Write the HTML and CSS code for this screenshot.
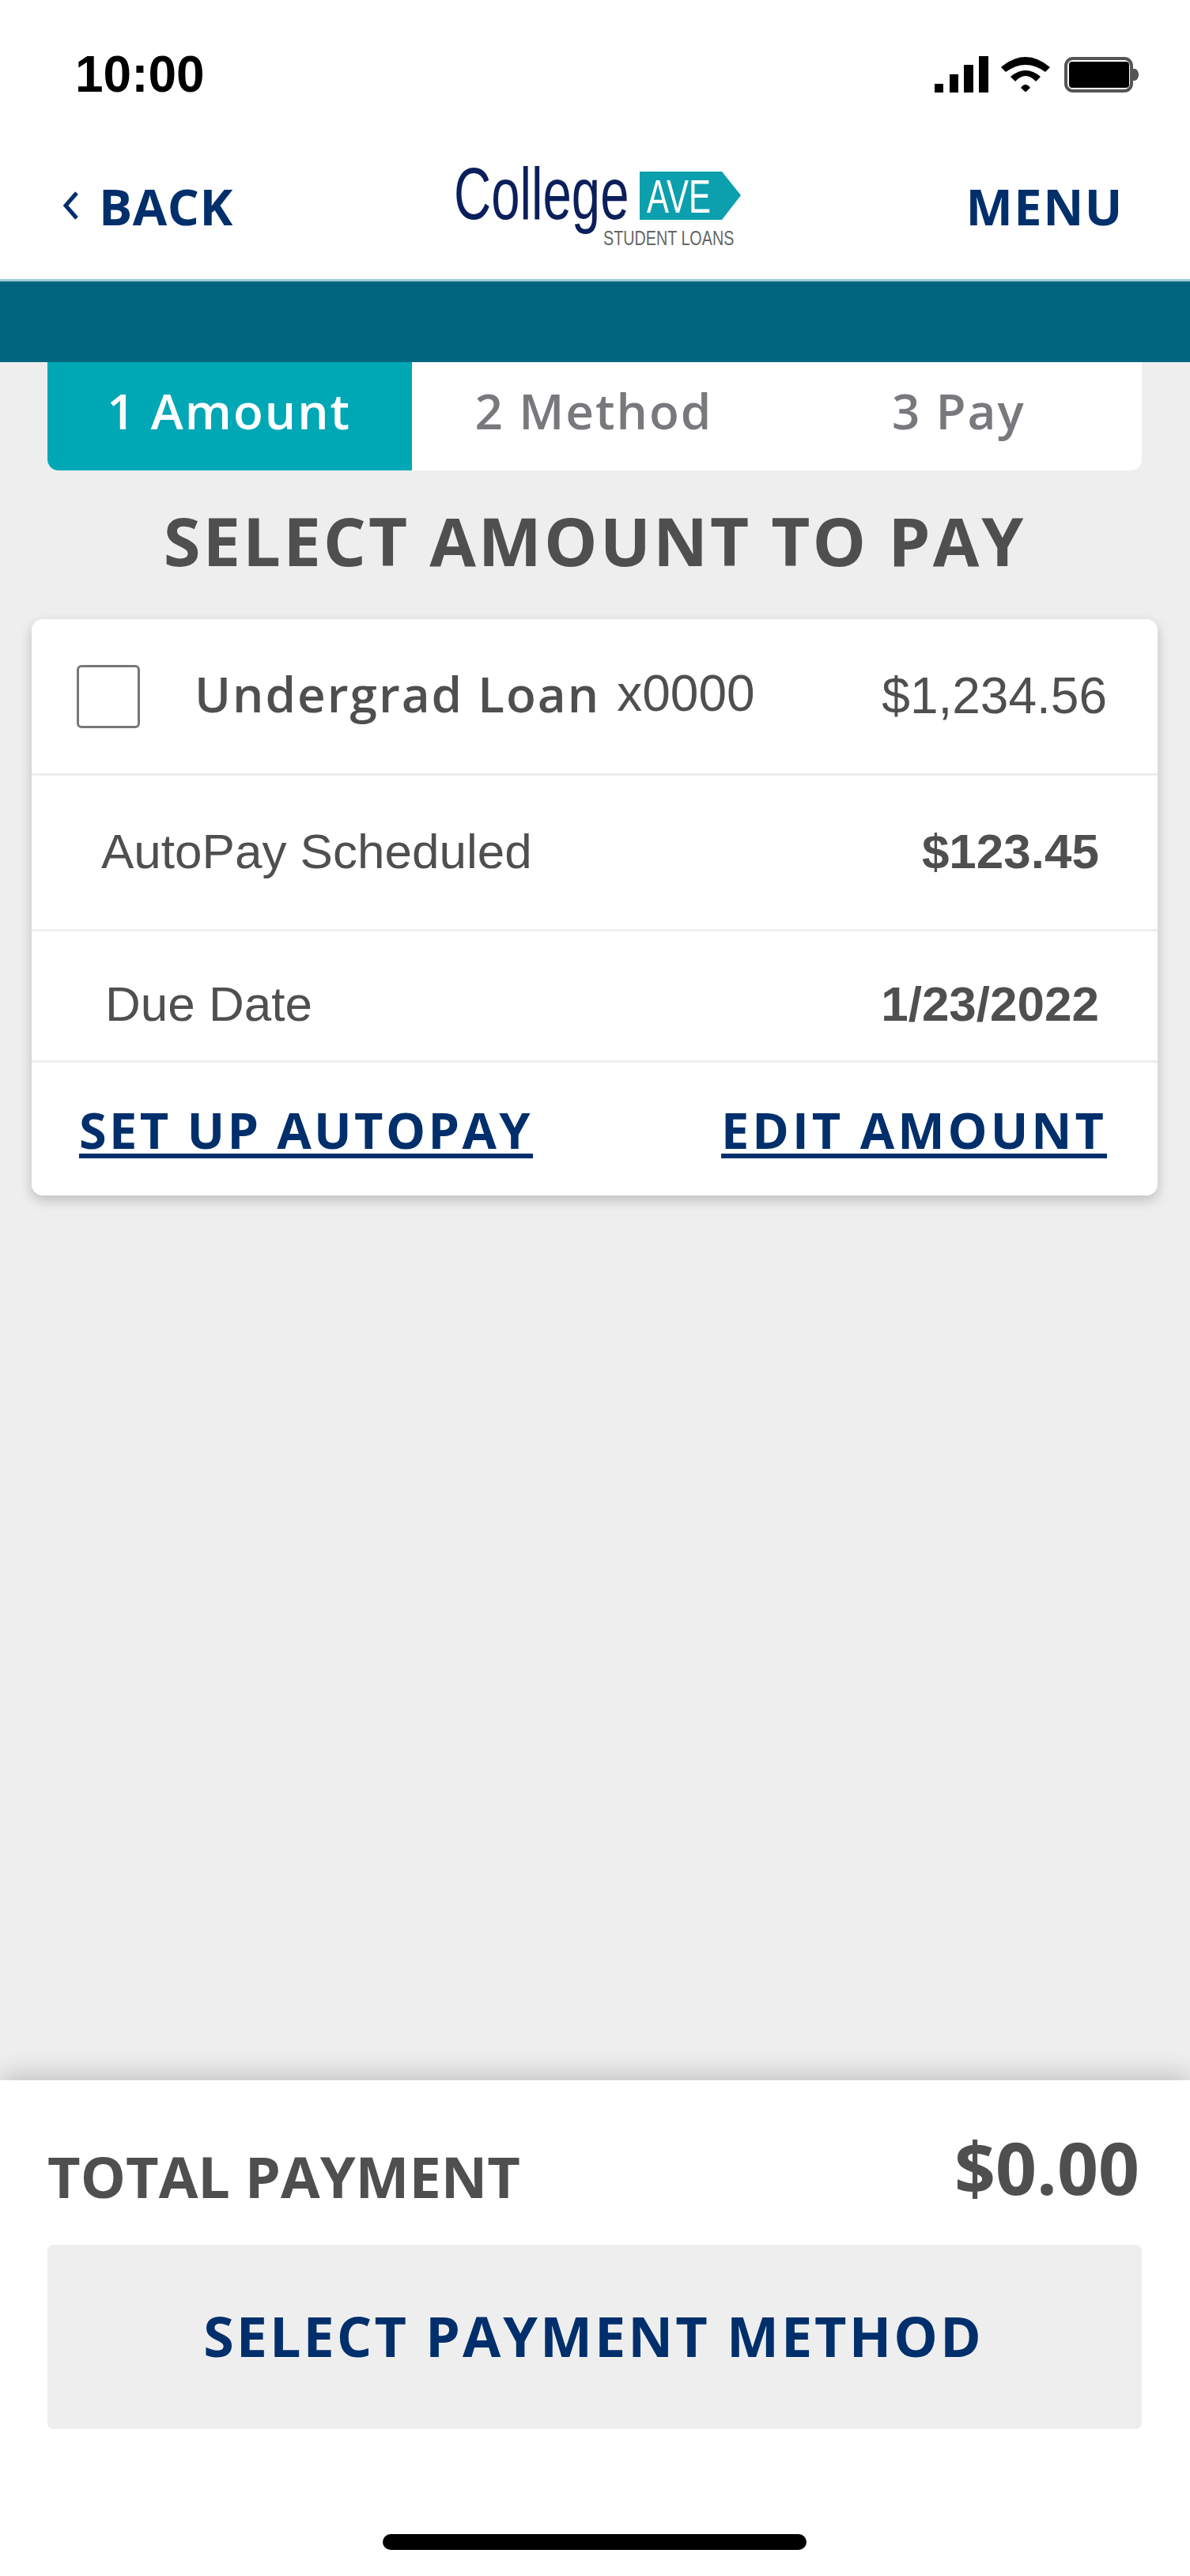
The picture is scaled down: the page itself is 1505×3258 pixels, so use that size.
FILE: index.html
```html
<!DOCTYPE html>
<html lang="en">
<head>
	<meta charset="utf-8">
	<title>Select amount to pay</title>
	<link rel="stylesheet" href="styles.css">
</head>
<body>
<div id="top">
	<div class="status">
		<span class="time">10:00</span>
		<svg class="status-icons" width="258" height="46" viewBox="0 0 258 46">
			<rect x="0" y="35" width="11" height="11"/>
			<rect x="19" y="23" width="11" height="23"/>
			<rect x="37" y="11" width="12" height="35"/>
			<rect x="56" y="0" width="12" height="46"/>
			<path d="M84 14 Q115 -12 146 14 L140 20 Q115 2 90 20 Z"/>
			<path d="M96 26 Q115 10 134 26 L128 32 Q115 18 102 32 Z"/>
			<path d="M109 40 Q115 32 121 40 L115 45.500 Z"/>
			<rect x="166" y="3" width="83" height="41" rx="9" fill="none" stroke="#555" stroke-width="4"/>
			<rect x="170" y="7" width="76" height="33" rx="4"/>
			<path d="M251 16 h2 a5 7.500 0 0 1 5 7.500 a5 7.500 0 0 1 -5 7.500 h-2 z" fill="#555"/>
		</svg>
	</div>
	<div class="nav">
		<a class="nav-link back">
			<svg width="22" height="36" viewBox="0 0 22 36"><path d="M19 2 L5 18 L19 34" fill="none" stroke="#002f6c" stroke-width="5"/></svg>
			BACK
		</a>
		<svg class="logo" width="366" height="130" viewBox="-6 -20 366 130">
			<text transform="translate(-6 67) scale(0.71 1)" class="logo-college">College</text>
			<path d="M229 7 H333 L357 37 L333 68 H229 Z" fill="#0c9fae"/>
			<text transform="translate(238 59) scale(0.7 1)" class="logo-ave">AVE</text>
			<text transform="translate(183 100) scale(0.76 1)" class="logo-sub">STUDENT LOANS</text>
		</svg>
		<a class="nav-link">MENU</a>
	</div>
</div>
<div id="band"></div>

<div id="main">
	<div class="tabs">
		<div class="tab on">1 Amount</div>
		<div class="tab">2 Method</div>
		<div class="tab">3 Pay</div>
	</div>
	<h1>SELECT AMOUNT TO PAY</h1>
	<div class="card">
		<div class="row row-loan">
			<span class="check"></span>
			<span class="loan-name">Undergrad Loan</span>
			<span class="loan-num">x0000</span>
			<span class="loan-amt">$1,234.56</span>
		</div>
		<div class="row row-info">
			<span>AutoPay Scheduled</span>
			<b>$123.45</b>
		</div>
		<div class="row row-info row-due">
			<span>Due Date</span>
			<b>1/23/2022</b>
		</div>
		<div class="row row-links">
			<a>SET UP AUTOPAY</a>
			<a class="edit">EDIT AMOUNT</a>
		</div>
	</div>
</div>

<div id="bottom">
	<div class="total">
		<span class="total-label">TOTAL PAYMENT</span>
		<span class="total-amt">$0.00</span>
	</div>
	<button>SELECT PAYMENT METHOD</button>
	<div class="home"></div>
</div>
</body>
</html>
```

FILE: styles.css
```css
html, body {
	margin: 0;
	padding: 0;
}

body {
	width: 1505px;
	height: 3258px;
	display: flex;
	flex-direction: column;
	overflow: hidden;
	background-color: #eee;
	font-family: "Open Sans", sans-serif;
	color: #4f4f4f;
}

#top {
	height: 353px;
	background-color: #fff;
	border-bottom: 3px solid #9ccbd8;
}

.status {
	height: 228px;
	display: flex;
	justify-content: space-between;
	padding: 0 65px 0 95px;
}

.time {
	font-family: "Liberation Sans", sans-serif;
	font-weight: bold;
	font-size: 64px;
	line-height: 64px;
	margin-top: 62px;
	color: #000;
}

.status-icons {
	margin-top: 71px;
}

.nav {
	display: flex;
	justify-content: space-between;
	padding: 0 84px 0 78px;
}

.nav-link {
	display: flex;
	align-items: center;
	gap: 25px;
	height: 60px;
	margin-top: 2px;
	font-size: 63px;
	font-weight: 700;
	color: #002f6c;
	letter-spacing: 1.500px;
}

.nav-link.back {
	letter-spacing: 0.500px;
}

.logo {
	margin-top: -38px;
	margin-left: -2px;
}

.logo-college {
	font-family: "Liberation Sans", sans-serif;
	font-size: 92px;
	fill: #0b1f5c;
}

.logo-ave {
	font-family: "Liberation Sans", sans-serif;
	font-size: 60px;
	fill: #fff;
}

.logo-sub {
	font-family: "Liberation Sans", sans-serif;
	font-size: 26px;
	fill: #666;
}

#band {
	height: 102px;
	background-color: #00667f;
}

#main {
	flex: 1;
	padding: 0 41px 0 40px;
}

.tabs {
	display: grid;
	grid-template-columns: repeat(3, 1fr);
	margin: 0 20px;
	height: 137px;
	background-color: #fff;
	border-radius: 0 0 14px 14px;
	overflow: hidden;
}

.tab {
	display: flex;
	align-items: center;
	justify-content: center;
	padding: 0 2px 16px 0;
	font-size: 62px;
	font-weight: 600;
	letter-spacing: 2px;
	color: #77797c;
}

.tab.on {
	background-color: #00a7b5;
	color: #fff;
}

h1 {
	margin: 46px 0 0;
	height: 142px;
	line-height: 84px;
	font-size: 85px;
	font-weight: 700;
	text-align: center;
	letter-spacing: 3px;
}

.card {
	background-color: #fff;
	border-radius: 14px;
	box-shadow: 0 6px 16px rgba(0, 0, 0, 0.2);
}

.row {
	display: flex;
	align-items: center;
	border-bottom: 3px solid #eee;
	font-family: "Liberation Sans", sans-serif;
	font-size: 62px;
}

.row-loan {
	height: 195px;
	padding: 0 64px 0 57px;
	font-size: 64px;
}

.check {
	width: 74px;
	height: 74px;
	border: 3px solid #777;
	border-radius: 6px;
	margin-right: 69px;
}

.loan-name {
	font-family: "Open Sans", sans-serif;
	font-weight: 600;
	font-size: 62px;
	letter-spacing: 2px;
	margin-top: -8px;
}

.loan-num {
	margin-left: 21px;
	margin-top: -8px;
}

.loan-amt {
	margin-left: auto;
	margin-top: -2px;
}

.row-info {
	height: 190px;
	justify-content: space-between;
	padding: 0 74px 4px 88px;
}

.row-due {
	height: 166px;
	padding-left: 93px;
	padding-top: 24px;
	box-sizing: border-box;
}

.row-links {
	height: 168px;
	justify-content: space-between;
	padding: 0 64px 0 60px;
	border-bottom: 0;
	font-family: "Open Sans", sans-serif;
	font-size: 63px;
	font-weight: 700;
	letter-spacing: 3.400px;
	color: #002f6c;
}

.row-links a {
	text-decoration: underline;
	text-underline-offset: 6px;
}

.row-links .edit {
	letter-spacing: 4px;
}

#bottom {
	height: 627px;
	background-color: #fff;
	box-shadow: 0 -6px 30px rgba(0, 0, 0, 0.2);
	padding: 0 61px 0 60px;
}

.total {
	display: flex;
	justify-content: space-between;
	align-items: flex-end;
	height: 165px;
}

.total-label {
	font-size: 72px;
	font-weight: 700;
	line-height: 100px;
	margin-bottom: -6px;
}

.total-amt {
	font-size: 91px;
	font-weight: 700;
	line-height: 110px;
	margin-right: 3px;
}

button {
	display: block;
	width: 100%;
	height: 233px;
	margin-top: 43px;
	padding: 0 3px 4px 0;
	border: 0;
	border-radius: 8px;
	background-color: #eee;
	font-family: "Open Sans", sans-serif;
	font-size: 70px;
	font-weight: 700;
	letter-spacing: 3px;
	color: #002f6c;
}

.home {
	width: 536px;
	height: 20px;
	margin: 133px auto 0;
	border-radius: 10px;
	background-color: #000;
}
```
